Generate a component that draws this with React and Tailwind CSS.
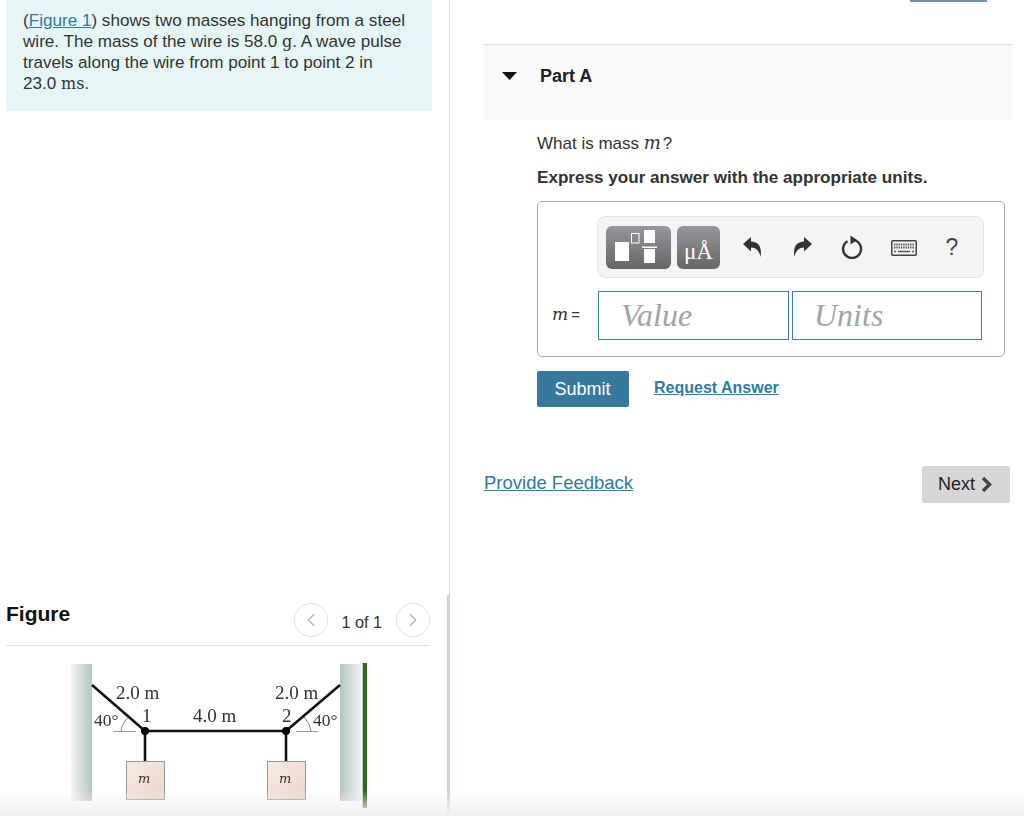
import React from "react";
import { ChevronLeft, ChevronRight } from "lucide-react";

const serif = "font-['Liberation_Serif',serif]";
const math = "font-['DejaVu_Serif',serif] leading-none";

const UndoIcon = () => (
  <svg width="19" height="20" viewBox="0 0 19 20" fill="#333">
    <path d="M0 7 L8 0 V4.5 C14.5 4.5 19.5 9 17.5 20 C16.5 14 13 10.5 8 10.5 V14.5 Z" />
  </svg>
);

const RedoIcon = () => (
  <svg width="19" height="20" viewBox="0 0 19 20" fill="#333">
    <path d="M19 7 L11 0 V4.5 C4.5 4.5 -0.5 9 1.5 20 C2.5 14 6 10.5 11 10.5 V14.5 Z" />
  </svg>
);

const ResetIcon = () => (
  <svg width="22" height="24" viewBox="0 0 22 24" fill="none">
    <path d="M6.5 6.2 A9 9 0 1 0 13 5.2" stroke="#333" strokeWidth="2.4" />
    <path d="M9.5 0.5 L16 5 L9.5 9.5 Z" fill="#333" />
  </svg>
);

const KeyboardIcon = () => (
  <svg width="26" height="16" viewBox="0 0 26 16" fill="none">
    <rect x="0.75" y="0.75" width="24.5" height="14.5" rx="1" stroke="#444" strokeWidth="1.5" />
    <path d="M3 4.5 H23" stroke="#555" strokeWidth="2" strokeDasharray="1.4 0.9" />
    <path d="M3 7.5 H23" stroke="#555" strokeWidth="2" strokeDasharray="1.4 0.9" />
    <path d="M3 11.5 H5 M7 11.5 H19 M21 11.5 H23" stroke="#555" strokeWidth="1.6" />
  </svg>
);

const FractionIcon = () => (
  <svg width="42" height="34" viewBox="0 0 42 34" fill="none">
    <rect x="0" y="12" width="14" height="19" fill="#fff" />
    <rect x="16.5" y="3.5" width="7.5" height="9.5" stroke="#fff" />
    <rect x="29" y="0" width="11" height="13" fill="#fff" />
    <rect x="27" y="16.5" width="15" height="1.5" fill="#fff" />
    <rect x="29" y="19" width="11" height="14" fill="#fff" />
  </svg>
);

// the figure is a blurry bitmap in the original, drawn here in page coordinates
const Diagram = () => (
  <svg
    width="300"
    height="153"
    viewBox="70 663 300 153"
    className="ml-[64px] mt-[17px] blur-[0.4px]"
  >
    <defs>
      <linearGradient id="wallL" x1="0" x2="1" y1="0" y2="0">
        <stop offset="0" stopColor="#f4f6f5" />
        <stop offset="1" stopColor="#b4c6bd" />
      </linearGradient>
      <linearGradient id="wallR" x1="0" x2="1" y1="0" y2="0">
        <stop offset="0" stopColor="#b4c6bd" />
        <stop offset="1" stopColor="#f4f6f5" />
      </linearGradient>
      <linearGradient id="block" x1="0" x2="1" y1="0" y2="1">
        <stop offset="0" stopColor="#f8ece6" />
        <stop offset="1" stopColor="#ecd4c8" />
      </linearGradient>
    </defs>
    <rect x="71" y="664" width="21" height="137" fill="url(#wallL)" />
    <rect x="340" y="664" width="22" height="137" fill="url(#wallR)" />
    <rect x="362.7" y="663" width="4.3" height="145" fill="#2a661c" />

    <path d="M113 731.5 H136 M296 731.5 H318" stroke="#999" strokeWidth="1" />
    <path d="M121 731 Q122 722 129 717 M311 731 Q310 723 304 717" stroke="#888" strokeWidth="1" fill="none" />

    <path
      d="M92 685 L145 731 H286 L340 685 M145 731 V761 M286 731 V761"
      stroke="#111"
      strokeWidth="2.6"
      fill="none"
    />
    <circle cx="145" cy="731" r="4" fill="#000" />
    <circle cx="286" cy="731" r="4" fill="#000" />

    <rect x="126.5" y="761.5" width="38" height="38" fill="url(#block)" stroke="#999" />
    <rect x="267.5" y="761.5" width="38" height="38" fill="url(#block)" stroke="#999" />

    <g fontFamily="Liberation Serif, serif" fontSize="19" fill="#333">
      <text x="116" y="699">2.0 m</text>
      <text x="275" y="699">2.0 m</text>
      <text x="193" y="722">4.0 m</text>
      <text x="142" y="722">1</text>
      <text x="282" y="722">2</text>
      <text x="94" y="726" fontSize="17.5">40°</text>
      <text x="313" y="726" fontSize="17.5">40°</text>
      <text x="138" y="783" fontSize="13" fontStyle="italic" fontFamily="DejaVu Serif, serif">m</text>
      <text x="279" y="783" fontSize="13" fontStyle="italic" fontFamily="DejaVu Serif, serif">m</text>
    </g>
  </svg>
);

export default function App() {
  return (
    <div className="relative flex h-[816px] w-[1024px] overflow-hidden bg-white font-['Liberation_Sans',sans-serif] text-[#333]">
      {/* Left column */}
      <div className="relative h-full w-[450px] shrink-0 border-r border-[#d9d9d9] pl-[6px]">
        <div className="h-[111px] w-[426px] bg-[#e6f6f6] pl-[17px] pt-[10px] text-[17.1px] leading-[21px]">
          (<a className="text-[#2f7a9e] underline">Figure 1</a>) shows two masses hanging from a steel
          <br />
          wire. The mass of the wire is 58.0 <span className={`${math} text-[16px]`}>g</span>. A wave pulse
          <br />
          travels along the wire from point 1 to point 2 in
          <br />
          23.0 <span className={`${math} text-[16px]`}>ms</span>.
        </div>

        <div className="mt-[492px] w-[424px]">
          <div className="flex h-[43px] justify-between border-b border-[#dcdcdc]">
            <div className="text-[21px] font-bold leading-[22px] text-[#111]">Figure</div>
            <div className="flex h-[34px] items-center text-[16.2px]">
              <span className="flex h-[34px] w-[34px] items-center justify-center rounded-full border border-[#e4e4e4] text-[#b5b5b5]">
                <ChevronLeft size={22} strokeWidth={1.5} />
              </span>
              <span className="ml-[13px] mr-[14px] mt-[4px]">1 of 1</span>
              <span className="flex h-[34px] w-[34px] items-center justify-center rounded-full border border-[#e4e4e4] text-[#b5b5b5]">
                <ChevronRight size={22} strokeWidth={1.5} />
              </span>
            </div>
          </div>
          <Diagram />
        </div>

        {/* lighter, bluish stretch of the divider */}
        <div className="absolute right-[-1px] top-[595px] h-[221px] w-[3px] bg-[#c9d6e2]" />
      </div>

      {/* Right column */}
      <div className="w-[563px] shrink-0 pl-[34px]">
        <div className="flex h-[44px] justify-end">
          <div className="mr-[26px] h-[2px] w-[77px] bg-[#6f93aa]" />
        </div>

        <div className="flex h-[76px] w-[528px] items-start border-t border-[#e0e0e0] bg-[#f9f9f9] pl-[18px] pt-[21px]">
          <svg width="15" height="8" viewBox="0 0 15 8" className="mt-[6px]">
            <path d="M0 0 H15 L7.5 8 Z" fill="#111" />
          </svg>
          <div className="ml-[23px] text-[18px] font-bold leading-[21px] text-[#222]">Part A</div>
        </div>

        <div className="pl-[53px]">
          <p className="pt-[13px] text-[17px] leading-[21px]">
            What is mass <span className={`${math} mr-[2px] text-[18px] italic`}>m</span>?
          </p>
          <p className="mt-[13px] text-[17.1px] font-bold leading-[21px]">
            Express your answer with the appropriate units.
          </p>

          <div className="mt-[13px] h-[156px] w-[468px] rounded-[5px] border border-[#aaaaaa]">
            <div className="ml-[59px] mt-[14px] flex h-[62px] w-[387px] items-center rounded-lg border border-[#e4e4e4] bg-[#f4f4f4] pl-[8px]">
              <div className="flex h-[43px] w-[65px] items-center justify-center rounded-md bg-gradient-to-b from-[#98969e] to-[#666666] pr-[5px]">
                <FractionIcon />
              </div>
              <div
                className={`ml-[6px] flex h-[43px] w-[43px] items-end justify-center rounded-md bg-gradient-to-b from-[#98969e] to-[#666666] pb-[3px] text-[23px] leading-[28px] text-white ${serif}`}
              >
                μÅ
              </div>
              <div className="ml-[7px] flex w-[50px] justify-center"><UndoIcon /></div>
              <div className="flex w-[50px] justify-center"><RedoIcon /></div>
              <div className="flex w-[50px] justify-center"><ResetIcon /></div>
              <div className="flex w-[50px] justify-center pl-[3px] pt-[2px]"><KeyboardIcon /></div>
              <div className="flex w-[50px] justify-center text-[23px] leading-[24px] text-[#444]">?</div>
            </div>

            <div className="mt-[13px] flex h-[49px] items-center pl-[14px]">
              <div className="w-[46px] whitespace-nowrap text-[15px]">
                <span className={`${math} mr-[3px] text-[17px] italic`}>m</span>=
              </div>
              <div className={`flex h-[49px] w-[191px] items-center border border-[#3d7fa3] pb-[2px] pl-[22px] text-[32px] italic text-[#a3a3a3] ${serif}`}>
                Value
              </div>
              <div className={`ml-[3px] flex h-[49px] w-[190px] items-center border border-[#3d7fa3] pb-[2px] pl-[21px] text-[32px] italic text-[#a3a3a3] ${serif}`}>
                Units
              </div>
            </div>
          </div>

          <div className="mt-[14px] flex h-[36px] items-center">
            <button className="flex h-[36px] w-[92px] items-center justify-center rounded-[2px] bg-[#37799c] pr-[1px] text-[18px] text-white">
              Submit
            </button>
            <a className="mb-[3px] ml-[25px] text-[16px] font-bold text-[#2f7a9e] underline">Request Answer</a>
          </div>
        </div>

        <div className="mt-[59px] flex w-[526px] items-start justify-between">
          <a className="text-[18.5px] leading-[34px] text-[#2f7a9e] underline">Provide Feedback</a>
          <button className="flex h-[37px] w-[88px] items-center justify-center gap-[6px] rounded-[2px] bg-[#d6d6d6] pr-[2px] text-[18px] text-[#222]">
            Next
            <svg width="11" height="17" viewBox="0 0 11 17" fill="none">
              <path d="M2 2 L8.5 8.5 L2 15" stroke="#444" strokeWidth="3.4" />
            </svg>
          </button>
        </div>
      </div>

      {/* page fade at the bottom edge */}
      <div className="pointer-events-none absolute bottom-0 left-0 h-[26px] w-full bg-gradient-to-b from-transparent to-[#efefef]" />
    </div>
  );
}
